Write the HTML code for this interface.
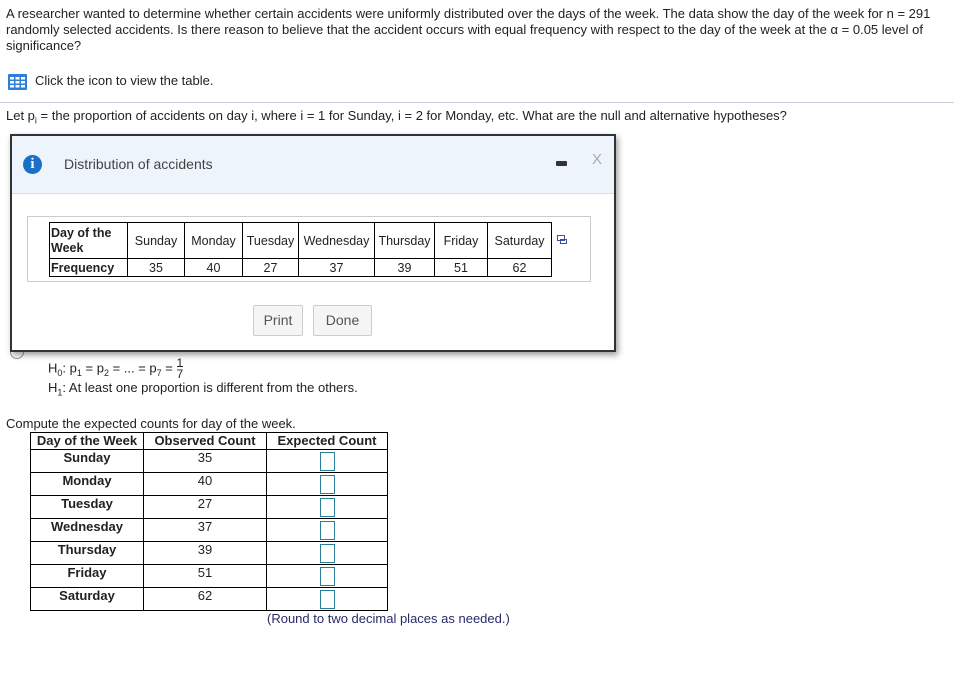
<!DOCTYPE html>
<html><head><style>
body{margin:0;width:954px;height:699px;background:#fff;font-family:"Liberation Sans",Arial,sans-serif;font-size:13px;color:#222;position:relative;overflow:hidden}
.a{position:absolute;white-space:nowrap}
table{border-collapse:collapse}
#t1 td{border:1px solid #000;text-align:center;padding:0;font-size:12.5px}
#t2 td{border:1px solid #000;text-align:center;padding:0;font-size:13px;vertical-align:top;height:23px;line-height:16px;box-sizing:border-box}
.in{display:block;width:15px;height:19px;box-sizing:border-box;border:1px solid #2a7f9a;margin:2px 0 0 53px}
.btn{position:absolute;border:1px solid #ccc;border-radius:2px;background:#f5f5f5;color:#555;font-size:14px;text-align:center;line-height:29px}
sub{font-size:9px}
</style></head><body>
<div class="a" style="left:6px;top:6px;line-height:16px;white-space:normal;width:940px">A researcher wanted to determine whether certain accidents were uniformly distributed over the days of the week. The data show the day of the week for n = 291 randomly selected accidents. Is there reason to believe that the accident occurs with equal frequency with respect to the day of the week at the α = 0.05 level of significance?</div>
<svg class="a" style="left:8px;top:74px" width="19" height="16"><rect width="19" height="16" rx="1" fill="#2f7fd9"/><g fill="#fff"><rect x="2" y="3" width="4" height="2.5"/><rect x="7.5" y="3" width="4" height="2.5"/><rect x="13" y="3" width="4" height="2.5"/><rect x="2" y="7" width="4" height="2.5"/><rect x="7.5" y="7" width="4" height="2.5"/><rect x="13" y="7" width="4" height="2.5"/><rect x="2" y="11" width="4" height="2.5"/><rect x="7.5" y="11" width="4" height="2.5"/><rect x="13" y="11" width="4" height="2.5"/></g></svg>
<div class="a" style="left:35px;top:73px">Click the icon to view the table.</div>
<div class="a" style="left:0;top:102px;width:954px;height:1px;background:#ccd"></div>
<div class="a" style="left:6px;top:108px">Let p<sub>i</sub> = the proportion of accidents on day i, where i = 1 for Sunday, i = 2 for Monday, etc. What are the null and alternative hypotheses?</div>

<div class="a" style="left:10px;top:345px;width:12px;height:12px;border:1px solid #999;border-radius:50%"></div>
<div class="a" style="left:48px;top:358px">H<sub>0</sub>: p<sub>1</sub> = p<sub>2</sub> = ... = p<sub>7</sub> = <span style="display:inline-block;vertical-align:middle;text-align:center;font-size:12px;line-height:11px">1<br><span style="border-top:1px solid #222">7</span></span></div>
<div class="a" style="left:48px;top:380px">H<sub>1</sub>: At least one proportion is different from the others.</div>

<div class="a" style="left:10px;top:134px;width:602px;height:214px;border:2px solid #333;background:#fff;box-shadow:2px 3px 6px rgba(0,0,0,.4)">
 <div style="position:absolute;left:0;top:0;width:602px;height:57px;background:#eef4fc;border-bottom:1px solid #cfe0f3"></div>
 <div style="position:absolute;left:11px;top:19px;width:19px;height:19px;border-radius:50%;background:#1a6fc9;color:#fff;font-weight:bold;font-family:'Liberation Serif',serif;font-size:15px;text-align:center;line-height:19px">i</div>
 <div style="position:absolute;left:52px;top:20px;font-size:14px;color:#444">Distribution of accidents</div>
 <div style="position:absolute;left:544px;top:25px;width:11px;height:5px;background:#333;border-radius:1px"></div>
 <div style="position:absolute;left:580px;top:15px;font-size:15px;color:#aaa">X</div>
 <div style="position:absolute;left:15px;top:80px;width:562px;height:64px;border:1px solid #ccc"></div>
 <table id="t1" style="position:absolute;left:37px;top:86px">
  <tr style="height:36px"><td style="width:76px;text-align:left;font-weight:bold;line-height:15px;padding-left:1px">Day of the<br>Week</td><td style="width:56px">Sunday</td><td style="width:57px">Monday</td><td style="width:55px">Tuesday</td><td style="width:75px">Wednesday</td><td style="width:59px">Thursday</td><td style="width:52px">Friday</td><td style="width:63px">Saturday</td></tr>
  <tr style="height:18px"><td style="text-align:left;font-weight:bold;padding-left:1px">Frequency</td><td>35</td><td>40</td><td>27</td><td>37</td><td>39</td><td>51</td><td>62</td></tr>
 </table>
 <svg style="position:absolute;left:545px;top:99px" width="11" height="10"><rect x="0.5" y="0.5" width="7" height="5" fill="none" stroke="#3a4fa0"/><rect x="3.5" y="4.5" width="6" height="4" fill="none" stroke="#3a4fa0"/></svg>
 <div class="btn" style="left:241px;top:169px;width:48px;height:29px">Print</div>
 <div class="btn" style="left:301px;top:169px;width:57px;height:29px">Done</div>
</div>

<div class="a" style="left:6px;top:416px">Compute the expected counts for day of the week.</div>
<table id="t2" class="a" style="left:30px;top:432px">
 <tr style="font-weight:bold"><td style="width:113px;height:17px;line-height:15px">Day of the Week</td><td style="width:123px;height:17px;line-height:15px">Observed Count</td><td style="width:121px;height:17px;line-height:15px">Expected Count</td></tr>
 <tr><td><b>Sunday</b></td><td>35</td><td><span class="in"></span></td></tr>
 <tr><td><b>Monday</b></td><td>40</td><td><span class="in"></span></td></tr>
 <tr><td><b>Tuesday</b></td><td>27</td><td><span class="in"></span></td></tr>
 <tr><td><b>Wednesday</b></td><td>37</td><td><span class="in"></span></td></tr>
 <tr><td><b>Thursday</b></td><td>39</td><td><span class="in"></span></td></tr>
 <tr><td><b>Friday</b></td><td>51</td><td><span class="in"></span></td></tr>
 <tr><td><b>Saturday</b></td><td>62</td><td><span class="in"></span></td></tr>
</table>
<div class="a" style="left:267px;top:611px;color:#2a2a6a">(Round to two decimal places as needed.)</div>
</body></html>
